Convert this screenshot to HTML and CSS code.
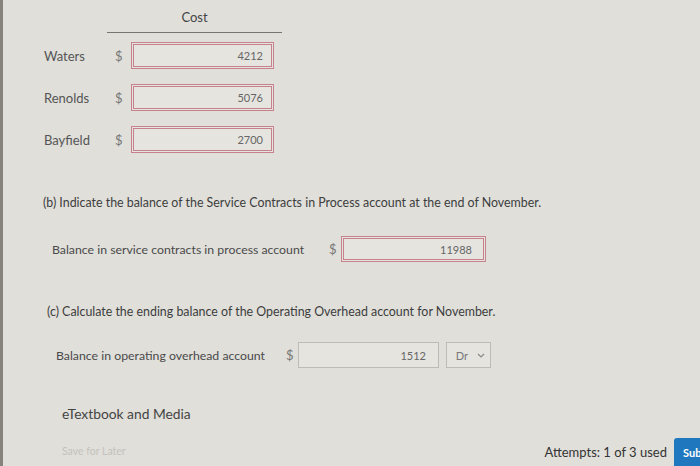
FILE: index.html
```html
<!DOCTYPE html>
<html>
<head>
<meta charset="utf-8">
<link rel="stylesheet" href="styles.css">
</head>
<body>
<main class="page">
  <section class="costs">
    <div class="cost-head"><span>Cost</span></div>
    <div class="cost-row">
      <span class="cost-label">Waters</span>
      <span class="dollar">$</span>
      <span class="field red">4212</span>
    </div>
    <div class="cost-row">
      <span class="cost-label">Renolds</span>
      <span class="dollar">$</span>
      <span class="field red">5076</span>
    </div>
    <div class="cost-row">
      <span class="cost-label">Bayfield</span>
      <span class="dollar">$</span>
      <span class="field red">2700</span>
    </div>
  </section>

  <p class="question qb">(b) Indicate the balance of the Service Contracts in Process account at the end of November.</p>
  <div class="answer ab">
    <span class="answer-label">Balance in service contracts in process account</span>
    <span class="dollar">$</span>
    <span class="field red wide">11988</span>
  </div>

  <p class="question qc">(c) Calculate the ending balance of the Operating Overhead account for November.</p>
  <div class="answer ac">
    <span class="answer-label">Balance in operating overhead account</span>
    <span class="dollar">$</span>
    <span class="field plain">1512</span>
    <span class="select">Dr<svg class="chev" viewBox="0 0 8 5" width="8" height="5"><path d="M1 1l3 3 3-3" fill="none" stroke="#8a8a8a" stroke-width="1.2"/></svg></span>
  </div>

  <div class="media">eTextbook and Media</div>

  <footer class="foot">
    <span class="save">Save for Later</span>
    <span class="attempts">Attempts: 1 of 3 used</span>
    <span class="submit">Sub</span>
  </footer>
</main>
</body>
</html>
```
FILE: styles.css
```css
html, body {
  margin: 0;
  padding: 0;
  height: 100%;
}
body {
  background: #e0dfda;
  font-family: Lato, "Open Sans", sans-serif;
  color: #444;
  border-left: 3px solid #85837c;
  box-sizing: border-box;
  overflow: hidden;
}
.page {
  display: flex;
  flex-direction: column;
  height: 466px;
}
.costs {
  display: flex;
  flex-direction: column;
  margin-left: 40px;
  width: 240px;
}
.cost-head {
  margin-left: 64px;
  width: 175px;
  height: 33px;
  border-bottom: 1px solid #77756f;
  display: flex;
  justify-content: center;
  align-items: center;
  padding-bottom: 2px;
  box-sizing: border-box;
}
.cost-head span {
  font-size: 13px;
  color: #444;
  margin-top: 4px;
}
.cost-row {
  display: flex;
  align-items: center;
  height: 27px;
  margin-top: 9px;
}
.cost-row + .cost-row {
  margin-top: 15px;
}
.cost-label {
  width: 64px;
  font-size: 13px;
  color: #555;
  padding-left: 1px;
}
.cost-row .dollar {
  width: 23px;
  padding-left: 7px;
  box-sizing: border-box;
}
.dollar {
  font-size: 13px;
  color: #777;
}
.field {
  display: flex;
  align-items: center;
  justify-content: flex-end;
  box-sizing: border-box;
  width: 143px;
  height: 27px;
  padding-right: 8px;
  font-size: 11px;
  color: #666;
  background: #e5e4df;
}
.field.red {
  border: 3px double #c6818c;
}
.field.wide {
  width: 145px;
  height: 26px;
  padding-right: 11px;
}
.field.plain {
  border: 1px solid #bdbbb5;
  width: 141px;
  height: 26px;
  padding-right: 12px;
}
.question {
  margin: 0;
  font-size: 12.4px;
  color: #3d3d3d;
}
.qb {
  margin-top: 42px;
  margin-left: 40px;
}
.answer {
  display: flex;
  align-items: center;
}
.answer-label {
  font-size: 12.3px;
  color: #4a4a4a;
}
.ab {
  margin-top: 26px;
  margin-left: 49px;
}
.ab .answer-label {
  width: 277px;
}
.ab .dollar {
  width: 12px;
}
.qc {
  margin-top: 42px;
  margin-left: 44px;
}
.ac {
  margin-top: 23px;
  margin-left: 53px;
}
.ac .answer-label {
  width: 230px;
}
.ac .dollar {
  width: 12px;
}
.select {
  margin-left: 7px;
  width: 45px;
  height: 26px;
  box-sizing: border-box;
  border: 1px solid #bdbbb5;
  background: #e5e4df;
  display: flex;
  align-items: center;
  justify-content: flex-end;
  gap: 9px;
  padding-right: 5px;
  font-size: 11px;
  color: #777;
}
.media {
  margin-top: 37px;
  margin-left: 59px;
  font-size: 13.8px;
  color: #444;
}
.foot {
  margin-top: auto;
  display: flex;
  align-items: center;
  height: 28px;
}
.save {
  margin-left: 59px;
  margin-bottom: 3px;
  font-size: 10.5px;
  color: #c4c2bc;
}
.attempts {
  margin-left: auto;
  font-size: 13px;
  color: #333;
  margin-right: 7px;
}
.submit {
  width: 26px;
  height: 28px;
  background: #1f78bd;
  color: #fff;
  font-size: 11px;
  font-weight: bold;
  display: flex;
  align-items: center;
  padding-left: 9px;
  box-sizing: border-box;
  border-radius: 3px 0 0 0;
}
```
